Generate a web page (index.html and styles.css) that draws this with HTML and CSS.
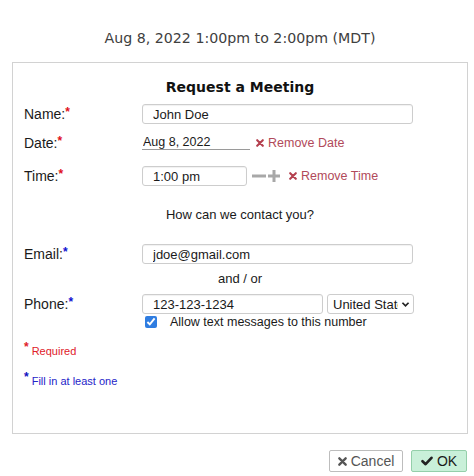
FILE: index.html
```html
<!DOCTYPE html>
<html>
<head>
<meta charset="utf-8">
<link rel="stylesheet" href="styles.css">
</head>
<body>
<div class="when">Aug 8, 2022 1:00pm to 2:00pm (MDT)</div>
<div class="box">
  <div class="title">Request a Meeting</div>
  <div class="row r-name">
    <div class="label">Name:<span class="req">*</span></div>
    <input class="field wide" type="text" value="John Doe">
  </div>
  <div class="row r-date">
    <div class="label">Date:<span class="req">*</span></div>
    <input class="datefield" type="text" value="Aug 8, 2022">
    <span class="remove"><svg class="x" viewBox="0 0 10 10" width="8" height="8"><path d="M1.5 1.5L8.5 8.5M8.5 1.5L1.5 8.5" stroke="#b4404f" stroke-width="2.6" stroke-linecap="round"/></svg>Remove Date</span>
  </div>
  <div class="row r-time">
    <div class="label">Time:<span class="req">*</span></div>
    <input class="field time" type="text" value="1:00 pm">
    <svg class="pm" viewBox="0 0 30 14" width="30" height="14"><path d="M1 7H15" stroke="#a8a8a8" stroke-width="3"/><path d="M17 7H29M23 1V13" stroke="#a8a8a8" stroke-width="3"/></svg>
    <span class="remove rt"><svg class="x" viewBox="0 0 10 10" width="8" height="8"><path d="M1.5 1.5L8.5 8.5M8.5 1.5L1.5 8.5" stroke="#b4404f" stroke-width="2.6" stroke-linecap="round"/></svg>Remove Time</span>
  </div>
  <div class="center contact">How can we contact you?</div>
  <div class="row r-email">
    <div class="label">Email:<span class="one">*</span></div>
    <input class="field wide" type="text" value="jdoe@gmail.com">
  </div>
  <div class="center andor">and / or</div>
  <div class="row r-phone">
    <div class="label">Phone:<span class="one">*</span></div>
    <input class="field phone" type="text" value="123-123-1234">
    <span class="selwrap">
      <select class="country"><option>United States</option></select>
      <svg class="chev" viewBox="0 0 10 8" width="9" height="7"><path d="M1.5 2L5 5.5L8.5 2" fill="none" stroke="#222" stroke-width="2"/></svg>
    </span>
  </div>
  <div class="row r-check">
    <input class="cb" type="checkbox" checked>
    <span class="cbtext">Allow text messages to this number</span>
  </div>
  <div class="note red"><span class="star">*</span>Required</div>
  <div class="note blue"><span class="star">*</span>Fill in at least one</div>
</div>
<div class="buttons">
  <button class="btn cancel"><svg viewBox="0 0 10 10" width="9" height="9"><path d="M1.5 1.5L8.5 8.5M8.5 1.5L1.5 8.5" stroke="#555" stroke-width="2.6" stroke-linecap="round"/></svg>Cancel</button>
  <button class="btn ok"><svg viewBox="0 0 12 10" width="12" height="10"><path d="M1.5 5.2L4.6 8.2L10.5 1.8" fill="none" stroke="#222" stroke-width="2.6" stroke-linecap="round" stroke-linejoin="round"/></svg>OK</button>
</div>
</body>
</html>
```
FILE: styles.css
```css
html, body {
  margin: 0;
  padding: 0;
  background: #fff;
}
body {
  width: 474px;
  font-family: "Liberation Sans", Arial, sans-serif;
  color: #222;
}
.when {
  margin-top: 28px;
  height: 20px;
  line-height: 20px;
  text-align: center;
  font-family: "DejaVu Sans", Verdana, sans-serif;
  font-size: 14.2px;
  color: #404040;
  padding-left: 6px;
}
.box {
  margin: 14px 0 0 12px;
  width: 456px;
  height: 372px;
  box-sizing: border-box;
  border: 1px solid #d2d2d2;
  padding: 14px 0 0 11px;
}
.title {
  height: 20px;
  line-height: 20px;
  text-align: center;
  margin-left: -11px;
  font-family: "DejaVu Sans", Verdana, sans-serif;
  font-weight: bold;
  font-size: 14px;
  color: #111;
}
.row {
  display: flex;
  align-items: center;
  height: 20px;
}
.label {
  width: 118px;
  flex: none;
  font-size: 14px;
  color: #1a1a1a;
}
.req, .one {
  font-weight: bold;
  font-size: 12px;
  position: relative;
  top: -3px;
}
.req { color: #e0101a; }
.one { color: #1010d0; }
.r-name { margin-top: 7px; }
.r-date { margin-top: 9px; }
.r-time { margin-top: 13px; }
.r-email { margin-top: 19px; }
.r-phone { margin-top: 5px; }
.r-check { margin-top: 0; height: 16px; padding-left: 121px; }
.field {
  box-sizing: border-box;
  height: 20px;
  border: 1px solid #cdcdcd;
  border-radius: 3px;
  box-shadow: inset 0 1px 1px rgba(0,0,0,0.06);
  padding: 0 0 0 10px;
  margin: 0;
  font-family: "Liberation Sans", Arial, sans-serif;
  font-size: 13px;
  color: #1a1a1a;
  outline: none;
}
.wide { width: 271px; }
.time { width: 105px; }
.phone { width: 181px; }
.datefield {
  box-sizing: border-box;
  width: 108px;
  height: 15px;
  margin: 0;
  padding: 0 0 0 1px;
  border: none;
  border-bottom: 1px solid #9a9a9a;
  font-family: "Liberation Sans", Arial, sans-serif;
  font-size: 12.5px;
  line-height: 14px;
  color: #1a1a1a;
  outline: none;
  position: relative;
  top: -1px;
}
.remove {
  display: flex;
  align-items: center;
  font-size: 12.5px;
  color: #b14a5a;
  margin-left: 6px;
}
.remove .x { margin-right: 4px; }
.pm { margin-left: 4px; }
.remove.rt { margin-left: 8px; }
.center {
  height: 20px;
  line-height: 20px;
  text-align: center;
  margin-left: -11px;
  font-size: 13px;
  color: #1a1a1a;
}
.contact { margin-top: 19px; }
.andor { margin-top: 5px; }
.selwrap {
  position: relative;
  margin-left: 4px;
  display: flex;
}
.country {
  -webkit-appearance: none;
  appearance: none;
  box-sizing: border-box;
  width: 87px;
  height: 20px;
  border: 1px solid #cdcdcd;
  border-radius: 3px;
  background: #fff;
  padding: 0 15px 0 5px;
  margin: 0;
  font-family: "Liberation Sans", Arial, sans-serif;
  font-size: 13px;
  color: #1a1a1a;
}
.chev {
  position: absolute;
  right: 4px;
  top: 7px;
}
.cb {
  margin: 0;
  width: 12px;
  height: 12px;
  accent-color: #2f7de1;
  flex: none;
}
.cbtext {
  margin-left: 13px;
  font-size: 12.5px;
  color: #1a1a1a;
}
.note {
  height: 16px;
  line-height: 16px;
  font-size: 11px;
}
.note .star {
  font-weight: bold;
  font-size: 12px;
  position: relative;
  top: -4px;
  margin-right: 3px;
}
.red { color: #e0202a; margin-top: 13px; }
.blue { color: #2424c8; margin-top: 14px; }
.blue .star { color: #1010c0; }
.buttons {
  display: flex;
  justify-content: flex-end;
  gap: 8px;
  margin-top: 16px;
  padding-right: 7px;
}
.btn {
  box-sizing: border-box;
  height: 22px;
  display: flex;
  align-items: center;
  justify-content: center;
  gap: 4px;
  font-family: "Liberation Sans", Arial, sans-serif;
  font-size: 14px;
  border-radius: 2px;
  padding: 0;
  margin: 0;
}
.cancel {
  width: 74px;
  background: #fff;
  border: 1px solid #bdbdbd;
  color: #555;
}
.ok {
  width: 56px;
  background: #c9f0d9;
  border: 1px solid #94cfaa;
  color: #1a1a1a;
}
```
